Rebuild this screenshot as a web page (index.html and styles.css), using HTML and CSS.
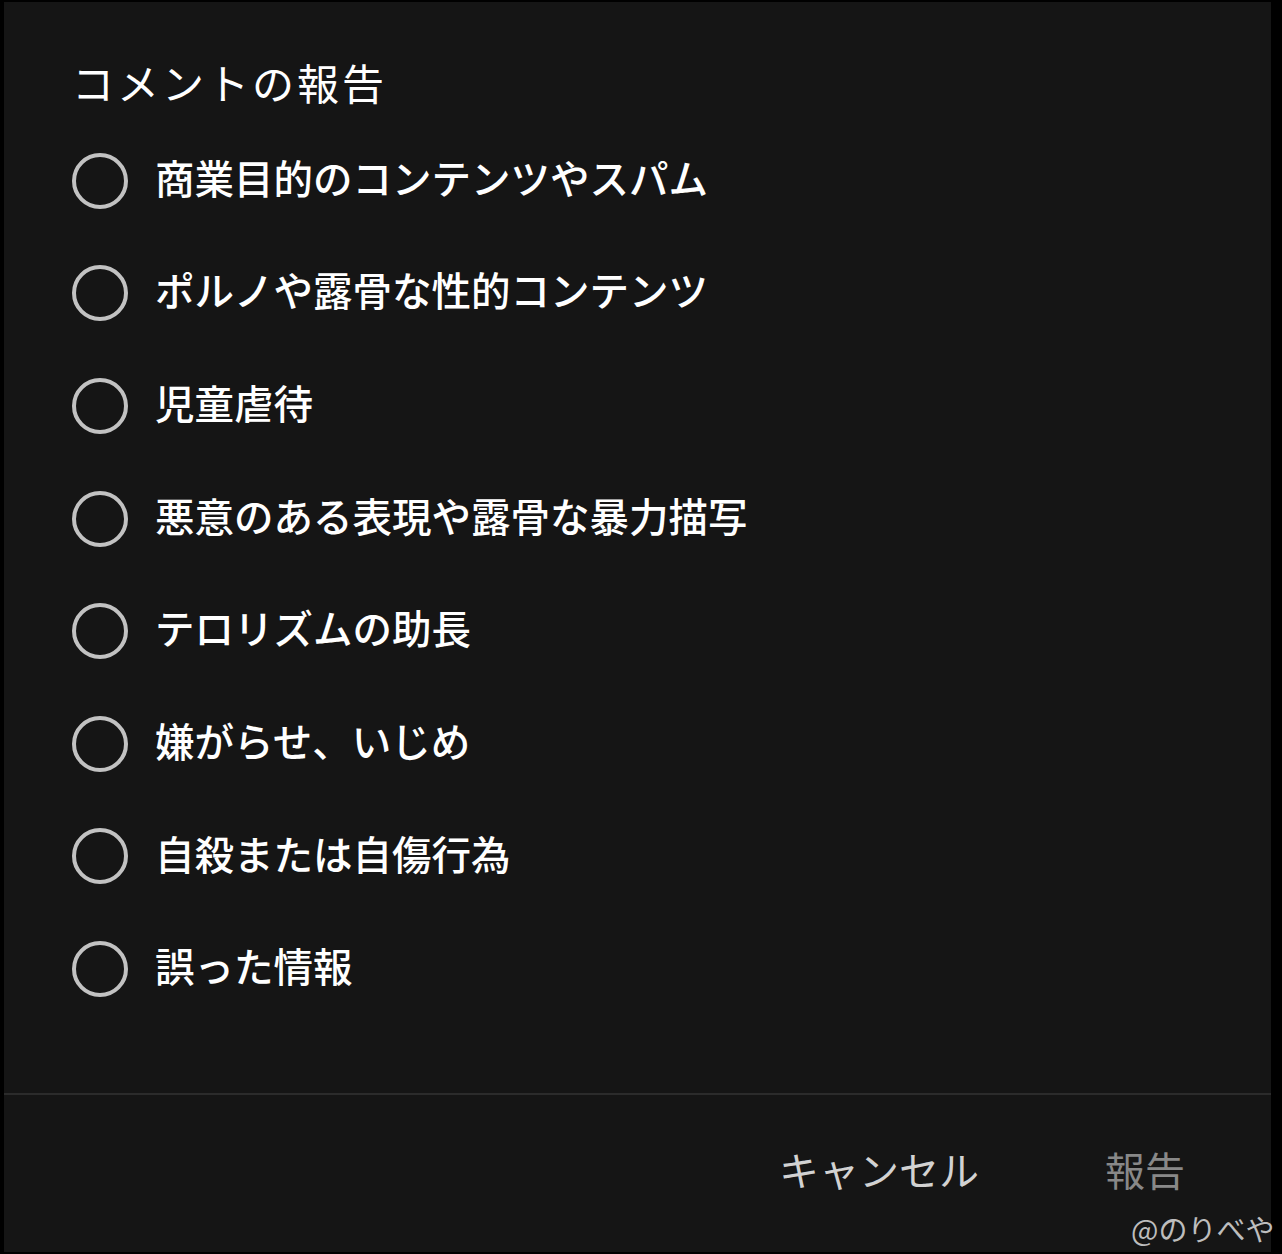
FILE: index.html
```html
<!DOCTYPE html>
<html lang="ja">
<head>
<meta charset="utf-8">
<title>コメントの報告</title>
<link rel="stylesheet" href="styles.css">
</head>
<body>
<div class="dialog">
  <h1 class="title">コメントの報告</h1>
  <ul class="options">
    <li class="option"><span class="radio"></span><span class="label">商業目的のコンテンツやスパム</span></li>
    <li class="option"><span class="radio"></span><span class="label">ポルノや露骨な性的コンテンツ</span></li>
    <li class="option"><span class="radio"></span><span class="label">児童虐待</span></li>
    <li class="option"><span class="radio"></span><span class="label">悪意のある表現や露骨な暴力描写</span></li>
    <li class="option"><span class="radio"></span><span class="label">テロリズムの助長</span></li>
    <li class="option"><span class="radio"></span><span class="label">嫌がらせ、いじめ</span></li>
    <li class="option"><span class="radio"></span><span class="label">自殺または自傷行為</span></li>
    <li class="option"><span class="radio"></span><span class="label">誤った情報</span></li>
  </ul>
  <div class="footer">
    <span class="btn btn-cancel">キャンセル</span>
    <span class="btn btn-report">報告</span>
  </div>
</div>
<div class="watermark">@のりべや</div>
</body>
</html>
```
FILE: styles.css
```css
html, body {
  margin: 0;
  padding: 0;
  background: #000;
}
body {
  width: 1282px;
  height: 1254px;
  position: relative;
  overflow: hidden;
  font-family: "Noto Sans CJK JP", "Noto Sans", sans-serif;
}
.dialog {
  box-sizing: border-box;
  margin: 2px 11px 0 4px;
  width: 1267px;
  height: 1250px;
  background: #151515;
  display: flex;
  flex-direction: column;
}
.title {
  margin: 58.5px 0 0 68px;
  font-size: 42px;
  line-height: 42px;
  letter-spacing: 3px;
  font-weight: 400;
  color: #fff;
}
.options {
  list-style: none;
  margin: 21.8px 0 0 0;
  padding: 0 0 0 68px;
}
.option {
  height: 112.65px;
  display: flex;
  align-items: center;
}
.radio {
  box-sizing: border-box;
  width: 56px;
  height: 56px;
  border: 4px solid #c2c2c2;
  border-radius: 50%;
  flex: none;
}
.label {
  margin-left: 27px;
  padding-bottom: 8.4px;
  font-size: 39.5px;
  line-height: 39.5px;
  color: #fff;
  font-weight: 500;
}
.footer {
  margin-top: 67.5px;
  border-top: 2px solid #2b2b2b;
  padding: 54.5px 86px 0 0;
  display: flex;
  justify-content: flex-end;
  gap: 126px;
}
.btn {
  font-size: 40px;
  line-height: 40px;
}
.btn-cancel {
  color: #d2d2d2;
}
.btn-report {
  color: #888;
}
.watermark {
  position: absolute;
  left: 1131px;
  top: 1212px;
  font-size: 29px;
  line-height: 32px;
  color: #bdbdbd;
  white-space: nowrap;
}
```
